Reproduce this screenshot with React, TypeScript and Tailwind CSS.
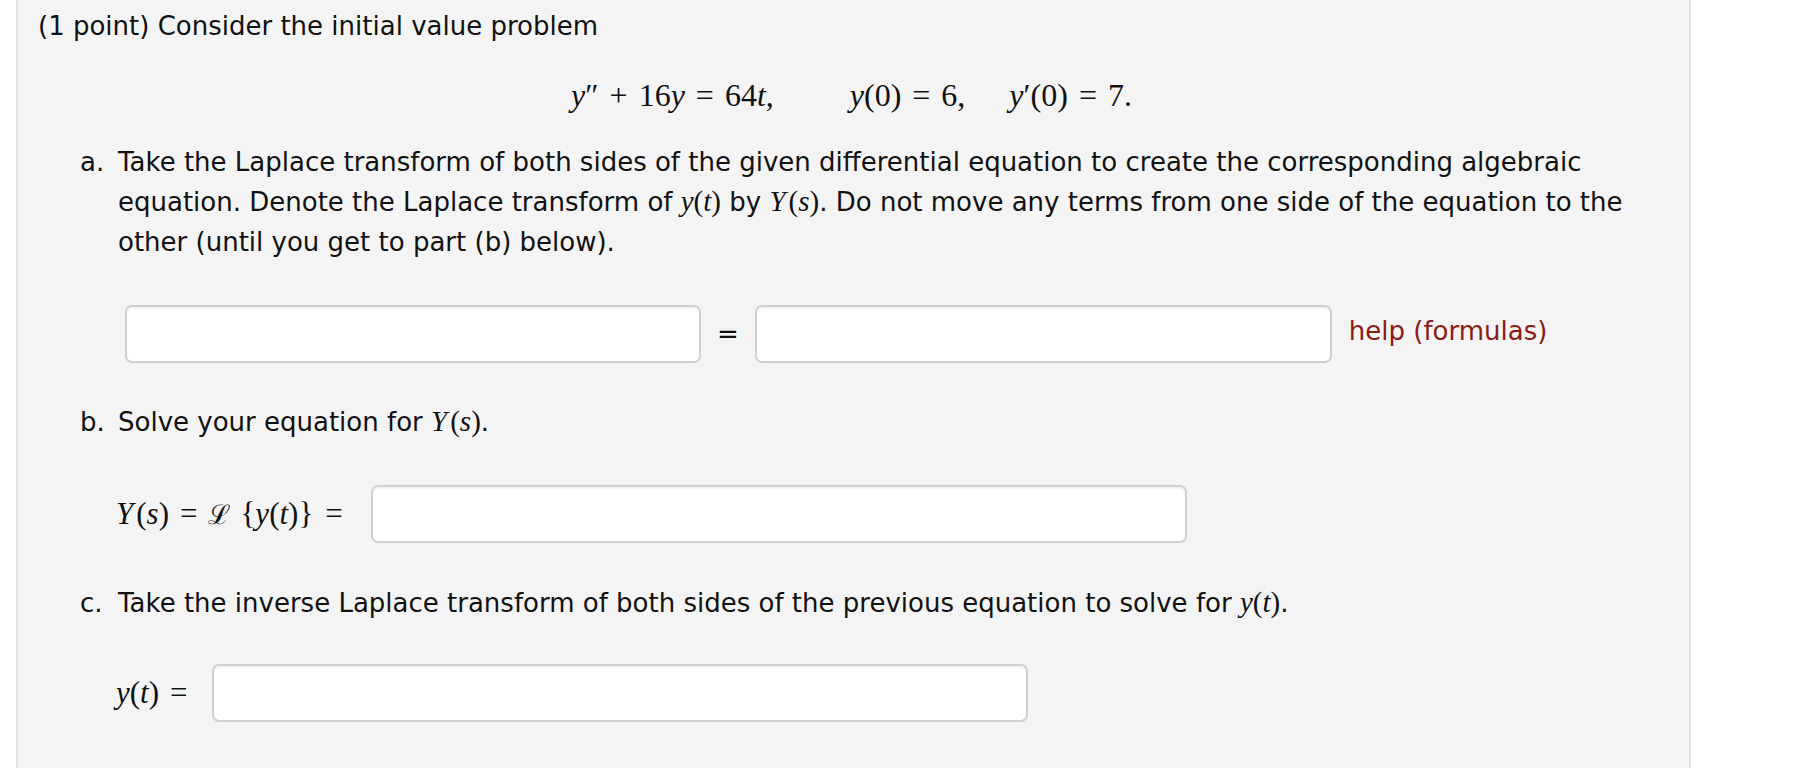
import React from "react";

const sans = "font-['DejaVu_Sans','Liberation_Sans',sans-serif]";
const serif = "font-['Liberation_Serif','DejaVu_Serif',serif]";

function M({ children }: { children: React.ReactNode }) {
  // inline math, set in a serif like the MathJax output
  return <span className={`${serif} text-[29px] leading-none`}>{children}</span>;
}

function I({ children }: { children: React.ReactNode }) {
  return <span className="italic">{children}</span>;
}

function Op({ children, gap = "mx-[11px]" }: { children: React.ReactNode; gap?: string }) {
  return <span className={gap}>{children}</span>;
}

function Blank({ width }: { width: string }) {
  return (
    <div
      className={`${width} h-[58px] rounded-[7px] border-2 border-[#d0d0d0] bg-white shadow-[inset_0_2px_2px_rgba(0,0,0,0.06)]`}
    />
  );
}

function Part({ letter, children }: { letter: string; children: React.ReactNode }) {
  return (
    <div className="flex">
      <span className="w-[40px] shrink-0 pl-[2px]">{letter}</span>
      <div className="flex-1">{children}</div>
    </div>
  );
}

export default function App() {
  return (
    <div className="min-h-screen bg-white">
      <div
        className={`ml-[16px] w-[1675px] min-h-[768px] border-x-2 border-[#e2e2e2] bg-[#f4f4f4] pl-[20px] pr-[24px] pt-[6px] text-[26px] leading-[40px] text-[#111] ${sans}`}
      >
        <p>(1 point) Consider the initial value problem</p>

        {/* display equation */}
        <div className={`mt-[29px] flex justify-center ${serif} text-[32px] leading-[40px]`}>
          <span>
            <I>y</I>″<Op>+</Op>16<I>y</I>
            <Op>=</Op>64<I>t</I>,
          </span>
          <span className="ml-[76px]">
            <I>y</I>(0)<Op>=</Op>6,
          </span>
          <span className="ml-[44px]">
            <I>y</I>′(0)<Op>=</Op>7.
          </span>
        </div>

        <div className="ml-[40px] mt-[27px]">
          <Part letter="a.">
            <p className="pr-[10px]">
              Take the Laplace transform of both sides of the given differential equation to create the corresponding
              algebraic equation. Denote the Laplace transform of{" "}
              <M>
                <I>y</I>(<I>t</I>)
              </M>{" "}
              by{" "}
              <M>
                <I>Y</I>
                <span className="ml-[3px]">(</span>
                <I>s</I>)
              </M>
              . Do not move any terms from one side of the equation to the other (until you get to part (b) below).
            </p>
          </Part>

          <div className="mt-[43px] flex items-center pl-[47px]">
            <Blank width="w-[576px]" />
            <span className="mx-[16px]">=</span>
            <Blank width="w-[577px]" />
            <span className="ml-[17px] -mt-[6px] text-[#8a1c14]">help (formulas)</span>
          </div>

          <div className="mt-[39px]">
            <Part letter="b.">
              <p>
                Solve your equation for{" "}
                <M>
                  <I>Y</I>
                  <span className="ml-[3px]">(</span>
                  <I>s</I>)
                </M>
                .
              </p>
            </Part>
          </div>

          <div className="mt-[43px] flex items-center pl-[38px]">
            <span className={`${serif} text-[31px]`}>
              <I>Y</I>
              <span className="ml-[3px]">(</span>
              <I>s</I>)<Op>=</Op>
              <span className="font-['DejaVu_Serif',serif] text-[27px]">ℒ</span>
              <span className="ml-[10px]">{"{"}</span>
              <I>y</I>(<I>t</I>){"}"}
              <Op gap="mx-[12px]">=</Op>
            </span>
            <div className="ml-[16px]">
              <Blank width="w-[816px]" />
            </div>
          </div>

          <div className="mt-[40px]">
            <Part letter="c.">
              <p>
                Take the inverse Laplace transform of both sides of the previous equation to solve for{" "}
                <M>
                  <I>y</I>(<I>t</I>)
                </M>
                .
              </p>
            </Part>
          </div>

          <div className="mt-[41px] flex items-center pl-[38px]">
            <span className={`${serif} text-[31px]`}>
              <I>y</I>(<I>t</I>)<Op>=</Op>
            </span>
            <div className="ml-[13px]">
              <Blank width="w-[816px]" />
            </div>
          </div>
        </div>
      </div>
    </div>
  );
}
